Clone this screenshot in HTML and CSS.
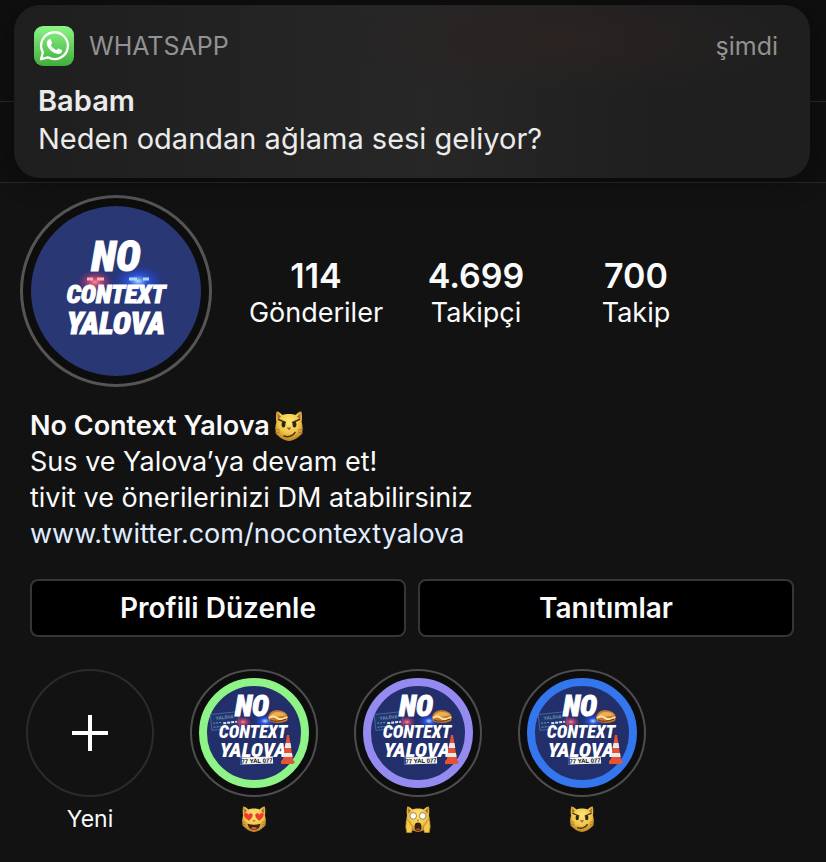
FILE: index.html
```html
<!DOCTYPE html>
<html lang="tr">
<head>
    <meta charset="UTF-8">
    <meta name="viewport" content="width=device-width, initial-scale=1.0">
    <title>No Context Yalova</title>
    <link rel="stylesheet" href="styles.css">
</head>
<body>
    <!-- shared drawings -->
    <svg class="sprites" aria-hidden="true">
        <defs>
            <radialGradient id="fur" cx="50%" cy="35%" r="65%">
                <stop offset="0" stop-color="#ffe873"/>
                <stop offset="0.6" stop-color="#f0c64b"/>
                <stop offset="1" stop-color="#b98022"/>
            </radialGradient>
            <radialGradient id="red-light">
                <stop offset="0" stop-color="#ff8b9c"/>
                <stop offset="0.35" stop-color="#e34b70" stop-opacity="0.7"/>
                <stop offset="1" stop-color="#a32b70" stop-opacity="0"/>
            </radialGradient>
            <radialGradient id="blue-light">
                <stop offset="0" stop-color="#b9e5ff"/>
                <stop offset="0.35" stop-color="#2f62ff" stop-opacity="0.7"/>
                <stop offset="1" stop-color="#1c35d0" stop-opacity="0"/>
            </radialGradient>
            <linearGradient id="wa-green" x1="0" y1="0" x2="0" y2="1">
                <stop offset="0" stop-color="#8bf586"/>
                <stop offset="1" stop-color="#41ad3c"/>
            </linearGradient>
        </defs>
        <symbol id="cat-head" viewBox="0 0 30 32">
            <path d="M2.5 1.5 C4.5 1 7 3.500 8.500 5 C12 3.700 18 3.700 21.500 5 C23 3.500 25.500 1 27.500 1.500 C28.300 5 28.200 9 27.600 12 C29 16 29 21 27.500 24.500 C24.500 27 20 31 15 31 C10 31 5.500 27 2.500 24.500 C1 21 1 16 2.400 12 C1.800 9 1.700 5 2.500 1.500Z" fill="url(#fur)"/>
            <path d="M3.600 3.500 L7 6.500 L3.800 10Z M26.400 3.500 L23 6.500 L26.200 10Z" fill="#a86f37"/>
            <path d="M1 19 L6 20 M1 23 L6 22 M29 19 L24 20 M29 23 L24 22" stroke="#a8782b" stroke-width="0.800"/>
        </symbol>
        <symbol id="cat-smirk" viewBox="0 0 30 32">
            <use href="#cat-head"/>
            <path d="M4.500 9.500 L11.500 12.500 M25.500 9.500 L18.500 12.500" stroke="#49330f" stroke-width="1.400" stroke-linecap="round"/>
            <ellipse cx="9.500" cy="14.500" rx="1.900" ry="3" fill="#2e2514"/>
            <ellipse cx="20.500" cy="14.500" rx="1.900" ry="3" fill="#2e2514"/>
            <path d="M12.500 17.500 H17.500 L15 20.200Z" fill="#a65a45"/>
            <path d="M10 26 C14 27.500 19 26.500 21 22.500" fill="none" stroke="#49330f" stroke-width="1.600" stroke-linecap="round"/>
        </symbol>
        <symbol id="cat-love" viewBox="0 0 30 32">
            <use href="#cat-head"/>
            <path d="M9 18 C3 14 2.500 11 4.500 9.500 C6.500 8.500 8 10 8.500 11 C9.500 9.500 11.500 8.500 13 10 C14.500 12 13 15 9 18Z" fill="#f0392f"/>
            <path d="M21 18 C25 15 27.500 12 25.500 9.500 C24 8.500 22 9.500 21.500 11 C20.500 9.500 18.500 8.500 17 10 C15.500 12 17 15 21 18Z" fill="#f0392f"/>
            <path d="M13 17.500 H17 L15 19.500Z" fill="#a65a45"/>
            <path d="M7.500 21.500 Q15 24 22.500 21.500 Q21.500 28.500 15 28.500 Q8.500 28.500 7.500 21.500Z" fill="#40240f"/>
            <path d="M11 26.500 Q15 24 19 26.500 Q15 29.500 11 26.500Z" fill="#e0534b"/>
        </symbol>
        <symbol id="cat-weary" viewBox="0 0 30 32">
            <use href="#cat-head"/>
            <circle cx="9.500" cy="12.500" r="3.800" fill="#fff" stroke="#80541c" stroke-width="0.800"/>
            <circle cx="20.500" cy="12.500" r="3.800" fill="#fff" stroke="#80541c" stroke-width="0.800"/>
            <path d="M13.500 17 H16.500 L15 19Z" fill="#a65a45"/>
            <ellipse cx="15" cy="25" rx="4" ry="5" fill="#37200f"/>
            <path d="M12.500 28 Q15 25.500 17.500 28 Q15 30.500 12.500 28Z" fill="#aa4439"/>
            <path d="M1.500 18 Q3 16 4.500 18.500 L6.500 22 Q9.500 24 8.500 28 L7.500 32 H2 Q0 25 1.500 18Z" fill="#f3c94e" stroke="#a8741e" stroke-width="0.800"/>
            <path d="M28.500 18 Q27 16 25.500 18.500 L23.500 22 Q20.500 24 21.500 28 L22.500 32 H28 Q30 25 28.500 18Z" fill="#f3c94e" stroke="#a8741e" stroke-width="0.800"/>
        </symbol>
        <symbol id="story-art" viewBox="0 0 128 128">
            <circle cx="64" cy="64" r="51" fill="#222f6b" stroke="currentColor" stroke-width="8"/>
            <g transform="rotate(-6 35 52)">
                <rect x="21" y="44" width="28" height="16" fill="#20366f" stroke="#6281ae" stroke-width="0.600"/>
                <text class="card-text" x="26" y="50">YALOVA</text>
                <path d="M23 53 H31 M23 57 H30" stroke="#7894bd" stroke-dasharray="2 1"/>
                <path d="M33 54 H47" stroke="#dce6ff" stroke-width="2" stroke-dasharray="3 1"/>
            </g>
            <ellipse cx="53" cy="53" rx="9" ry="6" fill="url(#red-light)"/>
            <ellipse cx="75" cy="52" rx="12" ry="8" fill="url(#blue-light)"/>
            <text class="logo-text story-no" x="62" y="47">NO</text>
            <text class="logo-text story-context" x="63" y="69">CONTEXT</text>
            <text class="logo-text story-yalova" x="63" y="88">YALOVA</text>
            <path d="M78 48 Q79 42 87 41 Q97 42 98 48 L97 52 Q88 56 79 52Z" fill="#c77a2c"/>
            <path d="M80 47 Q82 43 88 43 Q94 43 96 46 Q88 49 80 47Z" fill="#edae59"/>
            <path d="M79 49 Q83 46 87 49 T97 48" fill="none" stroke="#ffe7a4" stroke-width="2"/>
            <path d="M80 51 Q87 54 96 50" fill="none" stroke="#6d2d19" stroke-width="1"/>
            <path d="M97 66 L99 66 L103 91 L105 93 L103 95 H91 V92 L93 90Z" fill="#e75235"/>
            <path d="M95.500 74 H100.500 L101.300 79 H94.600Z M93.600 84 H102 L102.600 88 H93Z" fill="#eee7e7"/>
            <g transform="rotate(-2 66 91)">
                <rect x="50" y="88" width="33" height="7" fill="#f4f4f4"/>
                <rect x="50" y="88" width="2" height="7" fill="#2455aa"/>
                <text class="plate-text" x="67" y="94">77 YAL 077</text>
            </g>
        </symbol>
    </svg>

    <header class="page-top">
        <div class="top-row nav-row"></div>
        <div class="top-row title-row"></div>
        <section class="notification">
            <div class="notification-head">
                <svg class="app-icon" viewBox="0 0 40 40" role="img" aria-label="WhatsApp">
                    <rect width="40" height="40" rx="9" fill="url(#wa-green)"/>
                    <path d="M7 33.200 L8.900 26.400 A13.400 13.400 0 1 1 13.800 31.300Z" fill="none" stroke="#fff" stroke-width="2.300" stroke-linejoin="round"/>
                    <path d="M15.100 13.200 C15.700 12.900 16.500 13 16.800 13.700 L18 16.600 C18.300 17.400 17.200 18.400 16.700 19 C18.100 21.500 20 23.100 22.600 24.200 C23.300 23.500 23.900 22.400 24.700 22.600 L27.700 24.100 C28.500 24.500 28 26.200 27.200 27 C25.800 28.300 23.800 28.200 21.500 27.300 C17.500 25.800 14.100 22.300 13 19 C12.300 16.600 13.300 14 15.100 13.200Z" fill="#fff"/>
                </svg>
                <span class="app-name">WHATSAPP</span>
                <time class="when">şimdi</time>
            </div>
            <div class="notification-body">
                <h2>Babam</h2>
                <p>Neden odandan ağlama sesi geliyor?</p>
            </div>
        </section>
    </header>

    <main>
        <section class="profile-head">
            <svg class="avatar" viewBox="0 0 192 192" role="img" aria-label="No Context Yalova">
                <circle cx="96" cy="96" r="94.500" fill="#0d0d0d" stroke="#555" stroke-width="3"/>
                <circle cx="96" cy="96" r="85" fill="#293775"/>
                <ellipse cx="75" cy="87" rx="18" ry="12" fill="url(#red-light)"/>
                <ellipse cx="118" cy="86" rx="26" ry="16" fill="url(#blue-light)"/>
                <path d="M67 84 H73 M77 84 H84" stroke="#ffb0b4" stroke-width="3"/>
                <path d="M109 84 H117 M123 84 H129" stroke="#a6daff" stroke-width="3"/>
                <text class="logo-text avatar-no" x="96" y="76">NO</text>
                <text class="logo-text avatar-context" x="96" y="108">CONTEXT</text>
                <text class="logo-text avatar-yalova" x="96" y="139">YALOVA</text>
            </svg>
            <ul class="stats">
                <li><strong>114</strong><span>Gönderiler</span></li>
                <li><strong>4.699</strong><span>Takipçi</span></li>
                <li><strong>700</strong><span>Takip</span></li>
            </ul>
        </section>

        <section class="bio">
            <h1>No Context Yalova<svg class="name-emoji" role="img" aria-label="Sırıtan kedi"><use href="#cat-smirk"/></svg></h1>
            <p>Sus ve Yalova’ya devam et!</p>
            <p>tivit ve önerilerinizi DM atabilirsiniz</p>
            <a href="#">www.twitter.com/nocontextyalova</a>
        </section>

        <div class="actions">
            <button type="button">Profili Düzenle</button>
            <button type="button">Tanıtımlar</button>
        </div>

        <div class="stories">
            <button type="button" class="story">
                <span class="story-circle story-new">
                    <svg class="plus" viewBox="0 0 36 36" aria-hidden="true"><path d="M0 18 H36 M18 0 V36" stroke="#fff" stroke-width="4"/></svg>
                </span>
                <span class="story-label">Yeni</span>
            </button>
            <a class="story" href="#" aria-label="Kalp gözlü kedi">
                <span class="story-circle green"><svg class="story-art"><use href="#story-art"/></svg></span>
                <span class="story-label"><svg class="emoji"><use href="#cat-love"/></svg></span>
            </a>
            <a class="story" href="#" aria-label="Şaşkın kedi">
                <span class="story-circle purple"><svg class="story-art"><use href="#story-art"/></svg></span>
                <span class="story-label"><svg class="emoji"><use href="#cat-weary"/></svg></span>
            </a>
            <a class="story" href="#" aria-label="Sırıtan kedi">
                <span class="story-circle blue"><svg class="story-art"><use href="#story-art"/></svg></span>
                <span class="story-label"><svg class="emoji"><use href="#cat-smirk"/></svg></span>
            </a>
        </div>
    </main>
</body>
</html>
```

FILE: styles.css
```css
* {
    box-sizing: border-box;
}
body {
    margin: 0;
    background-color: #121212;
    color: #fafafa;
    font-family: Inter, 'Liberation Sans', sans-serif;
    font-size: 27px;
    line-height: 36px;
}
h1, h2, p, ul {
    margin: 0;
    padding: 0;
    font-size: inherit;
}
button {
    font: inherit;
    color: inherit;
    cursor: pointer;
}
.sprites {
    position: absolute;
    width: 0;
    height: 0;
}

/* top of the page */
.page-top {
    position: relative;
    background-color: #0f0f0f;
}
.top-row {
    border-bottom: 1px solid #292929;
}
.nav-row {
    height: 102px;
}
.title-row {
    height: 81px;
}
.notification {
    position: absolute;
    top: 5px;
    left: 14px;
    right: 16px;
    padding: 20px 32px 20px 20px;
    border-radius: 26px;
    background: radial-gradient(ellipse at 68% 20%, #2a2322 0, transparent 30%),
        linear-gradient(90deg, #1e1e1e, #272727 52%, #1f1f1f 80%);
    box-shadow: 0 4px 24px rgba(0, 0, 0, 0.4);
    color: #ebebeb;
}
.notification-head {
    display: flex;
    align-items: center;
    gap: 15px;
    color: #929292;
    font-size: 25px;
    line-height: 42px;
}
.app-icon {
    width: 40px;
    height: 40px;
}
.when {
    margin-left: auto;
}
.notification-body {
    padding: 15px 4px 0;
    font-size: 29px;
    line-height: 38px;
}
.notification-body h2 {
    font-weight: 600;
}

/* profile */
.profile-head {
    display: flex;
    align-items: center;
    gap: 24px;
    padding: 12px 20px 0;
}
.avatar {
    width: 192px;
    height: 192px;
}
.logo-text {
    font-family: 'Roboto Condensed', 'Open Sans Condensed', Roboto, sans-serif;
    font-weight: 900;
    font-style: italic;
    text-anchor: middle;
    fill: #fff;
    stroke: #fff;
    stroke-width: 1px;
}
.avatar-no {
    font-size: 42px;
}
.avatar-context {
    font-size: 26px;
}
.avatar-yalova {
    font-size: 31px;
}
.stats {
    display: flex;
    padding-top: 5px;
    line-height: 37px;
    list-style: none;
}
.stats li {
    display: flex;
    flex-direction: column;
    width: 160px;
    text-align: center;
}
.stats strong {
    font-size: 34px;
    font-weight: 600;
}
.bio {
    padding: 21px 30px 0;
}
.bio h1 {
    display: flex;
    align-items: center;
    gap: 4px;
    font-weight: 600;
}
.name-emoji {
    width: 30px;
    height: 32px;
}
.bio a {
    color: #e0edff;
    text-decoration: none;
}
.actions {
    display: grid;
    grid-template-columns: 1fr 1fr;
    gap: 12px;
    padding: 27px 32px 0 30px;
}
.actions button {
    padding: 9px;
    border: 2px solid #363636;
    border-radius: 8px;
    background-color: #000;
    font-size: 28px;
    font-weight: 600;
}

/* highlights */
.stories {
    display: flex;
    gap: 36px;
    padding: 32px 26px;
}
.story {
    display: flex;
    flex-direction: column;
    gap: 4px;
    width: 128px;
    padding: 0;
    border: none;
    background: none;
    color: inherit;
    text-decoration: none;
}
.story-circle {
    display: flex;
    align-items: center;
    justify-content: center;
    width: 128px;
    height: 128px;
    border: 2px solid #4d4d4d;
    border-radius: 50%;
    background-color: #0d0d0d;
}
.story-new {
    border-color: #2b2b2b;
    background: none;
}
.green {
    color: #8ef487;
}
.purple {
    color: #958af0;
}
.blue {
    color: #3476ee;
}
.story-art {
    flex: none;
    width: 128px;
    height: 128px;
}
.plus {
    width: 36px;
    height: 36px;
}
.story-label {
    display: flex;
    align-items: center;
    justify-content: center;
    height: 36px;
    font-size: 23px;
}
.emoji {
    width: 26px;
    height: 28px;
}
.story-no {
    font-size: 29px;
}
.story-context {
    font-size: 18px;
    stroke-width: 0;
}
.story-yalova {
    font-size: 21px;
    stroke-width: 0;
}
.card-text {
    font-family: 'Liberation Mono', monospace;
    font-size: 5px;
    fill: #9bb3d6;
}
.plate-text {
    font-family: 'Liberation Sans', sans-serif;
    font-size: 6px;
    font-weight: bold;
    text-anchor: middle;
    fill: #111;
}
```
